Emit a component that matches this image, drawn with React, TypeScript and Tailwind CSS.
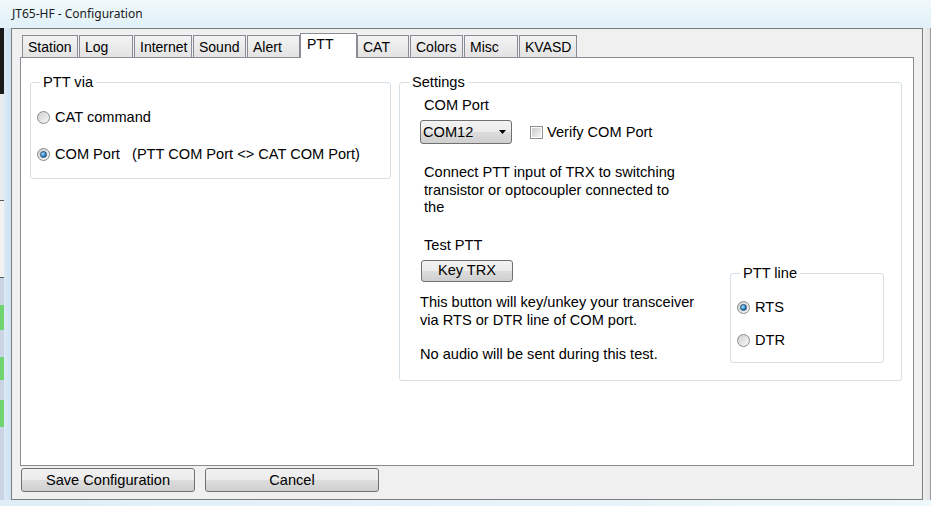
import React from "react"

const tabs = [
    { label: "Station", w: "w-[56px]", ml: "ml-0" },
    { label: "Log", w: "w-[54px]", ml: "ml-[1px]" },
    { label: "Internet", w: "w-[58px]", ml: "ml-[1px]" },
    { label: "Sound", w: "w-[53px]", ml: "ml-[1px]" },
    { label: "Alert", w: "w-[53px]", ml: "ml-[1px]" },
    { label: "PTT", w: "w-[57px]", ml: "ml-0", active: true },
    { label: "CAT", w: "w-[52px]", ml: "ml-0" },
    { label: "Colors", w: "w-[53px]", ml: "ml-[1px]" },
    { label: "Misc", w: "w-[54px]", ml: "ml-[1px]" },
    { label: "KVASD", w: "w-[58px]", ml: "ml-[1px]" },
]

const Radio = ({ checked, label }: { checked?: boolean; label: string }) => (
    <div className="flex items-center gap-[5px] h-[17px] leading-[17px] whitespace-pre">
        <span className="w-[13px] h-[13px] shrink-0 rounded-full border border-[#8a8a8a] bg-[linear-gradient(135deg,#cfcfcf,#f8f8f8)] flex items-center justify-center">
            {checked && (
                <span className="w-[7px] h-[7px] rounded-full border border-[#1e4e78] bg-[radial-gradient(circle_at_35%_35%,#a8e2ff,#2a7fc0_60%,#124a7c)]" />
            )}
        </span>
        <span>{label}</span>
    </div>
)

const Legend = ({ children }: { children: React.ReactNode }) => (
    <legend className="ml-[9px] px-[3px] h-[16px] leading-[16px]">{children}</legend>
)

const WinButton = ({ children, className }: { children: React.ReactNode; className?: string }) => (
    <button className={`rounded-[3px] border border-[#707070] bg-[linear-gradient(to_bottom,#f2f2f2_0%,#ebebeb_49%,#dddddd_50%,#cfcfcf_100%)] text-black leading-none flex items-center justify-center ${className ?? ""}`}>
        {children}
    </button>
)

const LeftStrip = () => (
    <div className="w-[11px] flex">
        <div className="w-[4px] flex flex-col">
            <div className="h-[66px] bg-[#1a1a1a]" />
            <div className="h-[106px] bg-[#e9ecef]" />
            <div className="h-[78px] bg-[#f2f2f2] border-y border-[#555]" />
            <div className="h-[27px] bg-[#c9d5e4]" />
            <div className="h-[25px] bg-[#6fd66f]" />
            <div className="h-[27px] bg-[#c9d5e4]" />
            <div className="h-[23px] bg-[#6fd66f]" />
            <div className="h-[20px] bg-[#c9d5e4]" />
            <div className="h-[27px] bg-[#6fd66f]" />
            <div className="flex-1 bg-[#c9d5e4]" />
        </div>
        <div className="w-[7px] bg-[linear-gradient(to_right,#dbe9f5,#cfe2f2)]" />
    </div>
)

export default function App() {
    return (
        <div className="w-[931px] h-[506px] overflow-hidden flex flex-col bg-[#e6f3f9] font-['Liberation_Sans',Arial,sans-serif] text-[14px] text-black">
            <div className="h-[28px] shrink-0 flex items-center pl-[12px] bg-[linear-gradient(to_bottom,#f1f9fc,#e0f1f8)] font-['Noto_Sans',sans-serif] text-[12px] text-[#1b1b1b]">
                JT65-HF - Configuration
            </div>
            <div className="flex h-[472px]">
                <LeftStrip />
                <div className="w-[912px] h-[472px] border border-[#7d7d7d] bg-[#f0f0f0] flex flex-col pl-[8px] pt-[4px]">
                    {/* tab strip */}
                    <div className="h-[24px] flex items-end pl-[2px]">
                        {tabs.map((t) =>
                            t.active ? (
                                <div
                                    key={t.label}
                                    className={`${t.w} ${t.ml} h-[25px] -mb-px relative z-10 bg-white border border-b-0 border-[#898c95] pl-[6px] pt-[2px] leading-[16px]`}
                                >
                                    {t.label}
                                </div>
                            ) : (
                                <div
                                    key={t.label}
                                    className={`${t.w} ${t.ml} h-[22px] border border-b-0 border-[#898c95] bg-[linear-gradient(to_bottom,#f3f3f3,#e3e3e3)] pl-[5px] pt-[3px] leading-[16px]`}
                                >
                                    {t.label}
                                </div>
                            )
                        )}
                    </div>

                    {/* tab panel */}
                    <div className="w-[894px] h-[409px] shrink-0 border border-[#898c95] bg-white flex items-start pl-[9px] pt-[16px] gap-[8px] text-[14.6px]">
                        <fieldset className="w-[361px] border border-[#d5dfe5] rounded-[3px]">
                            <Legend>PTT via</Legend>
                            <div className="pl-[6px] pb-[15px]">
                                <div className="pt-[19px]">
                                    <Radio label="CAT command" />
                                </div>
                                <div className="mt-[20px]">
                                    <Radio checked label={"COM Port   (PTT COM Port <> CAT COM Port)"} />
                                </div>
                            </div>
                        </fieldset>

                        <fieldset className="w-[503px] border border-[#d5dfe5] rounded-[3px]">
                            <Legend>Settings</Legend>
                            <div className="flex justify-between items-start pl-[20px] pr-[17px] pb-[17px]">
                                <div className="flex flex-col items-start">
                                    <div className="mt-[7px] ml-[4px] leading-[17px]">COM Port</div>
                                    <div className="mt-[6px] flex items-center">
                                        <div className="w-[92px] h-[24px] rounded-[3px] border border-[#707070] bg-[linear-gradient(to_bottom,#f2f2f2_0%,#ebebeb_49%,#dddddd_50%,#cfcfcf_100%)] flex items-center justify-between pl-[2px] pr-[5px]">
                                            <span className="leading-none">COM12</span>
                                            <svg width="7" height="4" viewBox="0 0 7 4">
                                                <polygon points="0,0 7,0 3.5,4" fill="#000" />
                                            </svg>
                                        </div>
                                        <div className="ml-[18px] flex items-center gap-[4px]">
                                            <span className="w-[13px] h-[13px] border border-[#8e8f8f] p-px bg-white">
                                                <span className="block w-full h-full bg-[linear-gradient(135deg,#cbcbcb,#f4f4f4)]" />
                                            </span>
                                            <span className="leading-[17px]">Verify COM Port</span>
                                        </div>
                                    </div>
                                    <div className="mt-[20px] ml-[4px] leading-[17.5px]">
                                        Connect PTT input of TRX to switching
                                        <br />
                                        transistor or optocoupler connected to
                                        <br />
                                        the
                                    </div>
                                    <div className="mt-[20px] ml-[4px] leading-[17px]">Test PTT</div>
                                    <WinButton className="mt-[6px] ml-[1px] w-[92px] h-[22px]">Key TRX</WinButton>
                                    <div className="mt-[11px] leading-[18px]">
                                        This button will key/unkey your transceiver
                                        <br />
                                        via RTS or DTR line of COM port.
                                    </div>
                                    <div className="mt-[16px] leading-[18px]">No audio will be sent during this test.</div>
                                </div>

                                <fieldset className="mt-[175px] w-[154px] border border-[#d5dfe5] rounded-[3px]">
                                    <Legend>PTT line</Legend>
                                    <div className="pl-[6px] pb-[13px]">
                                        <div className="pt-[18px]">
                                            <Radio checked label="RTS" />
                                        </div>
                                        <div className="mt-[16px]">
                                            <Radio label="DTR" />
                                        </div>
                                    </div>
                                </fieldset>
                            </div>
                        </fieldset>
                    </div>

                    {/* bottom buttons */}
                    <div className="mt-[2px] pl-[1px] flex gap-[10px] text-[14.6px]">
                        <WinButton className="w-[174px] h-[24px]">Save Configuration</WinButton>
                        <WinButton className="w-[174px] h-[24px]">Cancel</WinButton>
                    </div>
                </div>
                <div className="flex-1 bg-[linear-gradient(to_right,#eeeeee,#e4e4e4)] border-r border-[#9a9a9a]" />
            </div>
            <div className="flex-1 bg-[linear-gradient(to_right,#dfeef7,#eef7fb)]" />
        </div>
    )
}
